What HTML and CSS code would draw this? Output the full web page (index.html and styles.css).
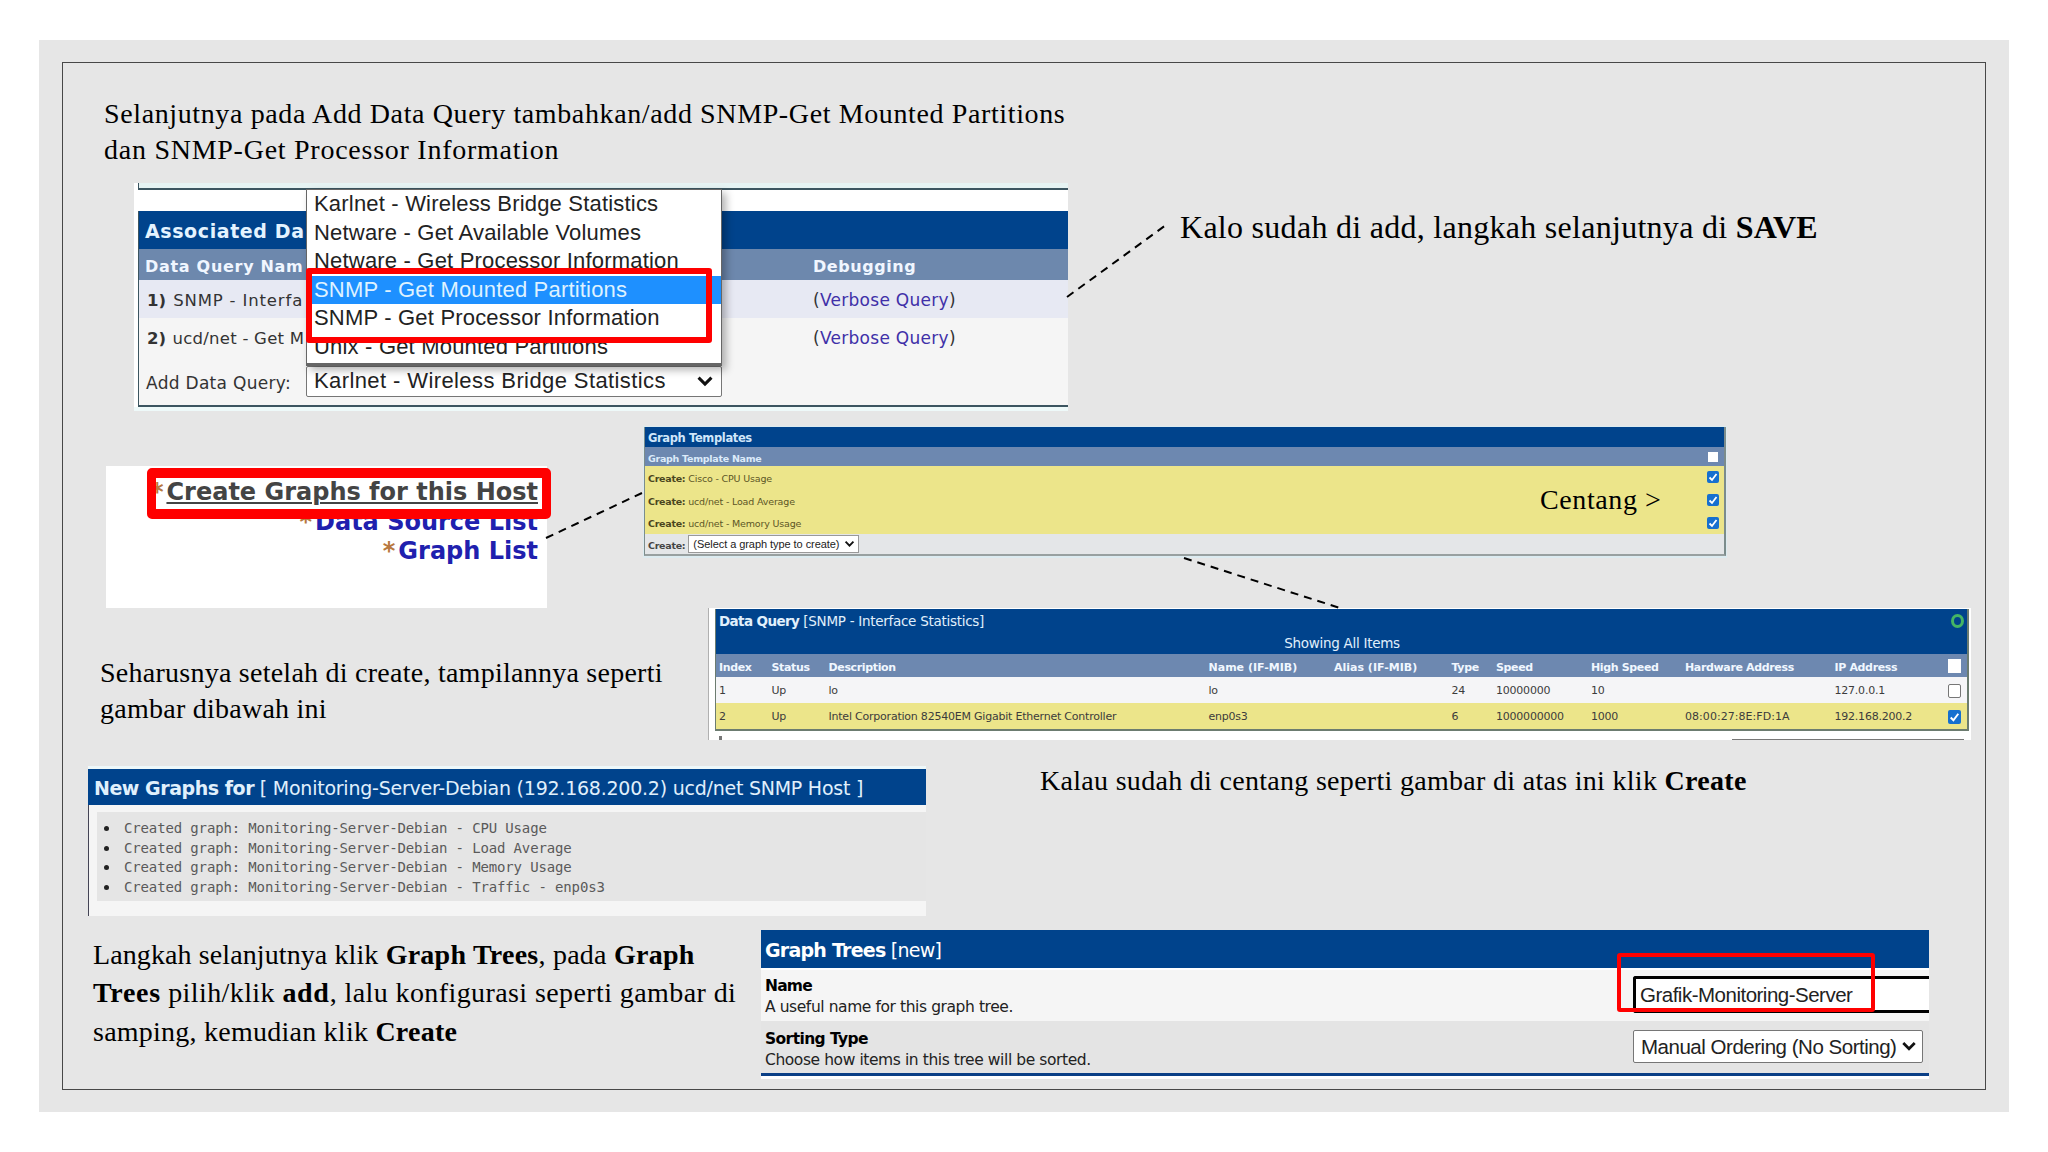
FILE: index.html
```
<!DOCTYPE html>
<html lang="id">
  <head>
    <meta charset="UTF-8" />
    <meta name="viewport" content="width=device-width, initial-scale=1.0" />
    <title>Monitoring Server - Cacti</title>
    <link rel="stylesheet" href="styles.css">
  </head>
  <body>
    <div class="page">
      <div class="slide"><div class="frame"></div></div>

      <p class="note note-query">
        Selanjutnya pada Add Data Query tambahkan/add SNMP-Get Mounted Partitions<br />
        <span class="wide">dan SNMP-Get Processor Information</span>
      </p>
      <p class="note note-save">Kalo sudah di add, langkah selanjutnya di <b>SAVE</b></p>
      <p class="note note-result">
        Seharusnya setelah di create, tampilannya seperti<br />
        gambar dibawah ini
      </p>
      <p class="note note-create">Kalau sudah di centang seperti gambar di atas ini klik <b>Create</b></p>
      <p class="note note-tree">
        <span class="line1">Langkah selanjutnya klik</span> <b>Graph Trees</b>, pada <b>Graph</b><br />
        <span class="line2"><b>Trees</b> pilih/klik <b>add</b>, lalu konfigurasi seperti gambar di</span><br />
        samping, kemudian klik <b>Create</b>
      </p>

      <!-- Associated Data Queries -->
      <div class="panel queries">
        <div class="queries-strip"></div>
        <div class="queries-table">
          <div class="q-row q-title"><b>Associated Da</b></div>
          <div class="q-row q-head"><b>Data Query Nam</b><b>Debugging</b></div>
          <div class="q-row q-one">
            <span><b>1)</b> SNMP - Interfa</span>
            <span>(<a>Verbose Query</a>)</span>
          </div>
          <div class="q-row q-two">
            <span><b>2)</b> ucd/net - Get M</span>
            <span>(<a>Verbose Query</a>)</span>
          </div>
          <div class="q-add">
            <span class="q-label">Add Data Query:</span>
            <div class="select q-select">
              <span>Karlnet - Wireless Bridge Statistics</span>
              <svg width="18" height="13" viewBox="0 0 14 10"><path d="M2 2l5 5 5-5" /></svg>
            </div>
          </div>
        </div>
        <ul class="popup">
          <li>Karlnet - Wireless Bridge Statistics</li>
          <li>Netware - Get Available Volumes</li>
          <li>Netware - Get Processor Information</li>
          <li class="active">SNMP - Get Mounted Partitions</li>
          <li>SNMP - Get Processor Information</li>
          <li>Unix - Get Mounted Partitions</li>
        </ul>
        <div class="mark mark-query"></div>
      </div>

      <!-- Host links -->
      <div class="panel links">
        <div class="link current"><i>*</i><u>Create Graphs for this Host</u></div>
        <div class="link"><i>*</i>Data Source List</div>
        <div class="link"><i>*</i>Graph List</div>
        <div class="mark mark-link"></div>
      </div>

      <!-- Graph Templates -->
      <div class="panel templates">
        <div class="t-row t-title"><b>Graph Templates</b></div>
        <div class="t-row t-head"><b>Graph Template Name</b><span class="box blank"></span></div>
        <div class="t-row t-on">
          <span><b>Create:</b> Cisco - CPU Usage</span>
          <span class="box on"><svg viewBox="0 0 12 12"><path d="M2.5 6.5l2.5 2.5 4.5-6" /></svg></span>
        </div>
        <div class="t-row t-on">
          <span><b>Create:</b> ucd/net - Load Average</span>
          <span class="box on"><svg viewBox="0 0 12 12"><path d="M2.5 6.5l2.5 2.5 4.5-6" /></svg></span>
        </div>
        <div class="t-row t-on">
          <span><b>Create:</b> ucd/net - Memory Usage</span>
          <span class="box on"><svg viewBox="0 0 12 12"><path d="M2.5 6.5l2.5 2.5 4.5-6" /></svg></span>
        </div>
        <div class="t-row t-last">
          <b>Create:</b>
          <div class="select t-select">
            <span>(Select a graph type to create)</span>
            <svg width="11" height="8" viewBox="0 0 14 10"><path d="M2 2l5 5 5-5" /></svg>
          </div>
        </div>
        <p class="note centang">Centang &gt;</p>
      </div>

      <!-- Data Query -->
      <div class="panel interfaces">
        <div class="i-table">
          <div class="i-title">
            <div class="i-name"><span><b>Data Query</b> [SNMP - Interface Statistics]</span><span class="ring"></span></div>
            <div class="i-all">Showing All Items</div>
          </div>
          <div class="i-row i-head">
            <b>Index</b><b>Status</b><b>Description</b><b class="ifmib">Name (IF-MIB)</b><b class="ifmib">Alias (IF-MIB)</b>
            <b>Type</b><b>Speed</b><b>High Speed</b><b>Hardware Address</b><b>IP Address</b><span class="box blank"></span>
          </div>
          <div class="i-row">
            <span>1</span><span>Up</span><span>lo</span><span>lo</span><span></span>
            <span>24</span><span>10000000</span><span>10</span><span></span><span>127.0.0.1</span><span class="box off"></span>
          </div>
          <div class="i-row i-on">
            <span>2</span><span>Up</span><span>Intel Corporation 82540EM Gigabit Ethernet Controller</span><span>enp0s3</span><span></span>
            <span>6</span><span>1000000000</span><span>1000</span><span class="mac">08:00:27:8E:FD:1A</span><span>192.168.200.2</span>
            <span class="box on"><svg viewBox="0 0 12 12"><path d="M2.5 6.5l2.5 2.5 4.5-6" /></svg></span>
          </div>
        </div>
        <div class="i-rest"><span class="speck"></span><span class="rule"></span></div>
      </div>

      <!-- New Graphs -->
      <div class="panel created">
        <div class="c-title"><b>New Graphs for</b> [ Monitoring-Server-Debian (192.168.200.2) ucd/net SNMP Host ]</div>
        <div class="c-body">
          <ul class="c-list">
            <li>Created graph: Monitoring-Server-Debian - CPU Usage</li>
            <li>Created graph: Monitoring-Server-Debian - Load Average</li>
            <li>Created graph: Monitoring-Server-Debian - Memory Usage</li>
            <li>Created graph: Monitoring-Server-Debian - Traffic - enp0s3</li>
          </ul>
        </div>
      </div>

      <!-- Graph Trees -->
      <div class="panel trees">
        <div class="g-title"><b>Graph Trees</b> [new]</div>
        <div class="g-row g-name">
          <div class="g-label"><b class="short">Name</b><span>A useful name for this graph tree.</span></div>
          <div class="g-input">Grafik-Monitoring-Server</div>
        </div>
        <div class="g-row g-sort">
          <div class="g-label"><b>Sorting Type</b><span>Choose how items in this tree will be sorted.</span></div>
          <div class="select g-select">
            <span>Manual Ordering (No Sorting)</span>
            <svg width="16" height="13" viewBox="0 0 14 10"><path d="M2 2l5 5 5-5" /></svg>
          </div>
        </div>
        <div class="mark mark-name"></div>
      </div>

      <!-- connectors -->
      <svg class="lines" width="2048" height="1152" viewBox="0 0 2048 1152">
        <path d="M1067 297L1166 225" />
        <path d="M546 538L642 493" />
        <path d="M1184 558L1340 608" />
      </svg>
    </div>
  </body>
</html>
```
FILE: styles.css
```
* {
  box-sizing: border-box;
  margin: 0;
  padding: 0;
}

body {
  background: #fff;
  font-family: "DejaVu Sans", sans-serif;
}

ul {
  list-style: none;
}

.page {
  position: relative;
  width: 2048px;
  height: 1152px;
  padding: 40px 39px;
  overflow: hidden;
}

.slide {
  width: 1970px;
  height: 1072px;
  padding: 22px 23px;
  background: #e6e6e6;
}

.frame {
  width: 1924px;
  height: 1028px;
  border: 1px solid #484848;
}

/* slide text */
.note {
  position: absolute;
  font-family: "Liberation Serif", serif;
  font-size: 28px;
  line-height: 36px;
  color: #000;
  white-space: nowrap;
}

.note-query {
  left: 104px;
  top: 96px;
  letter-spacing: 0.62px;
}

.note-query .wide {
  letter-spacing: 0.74px;
}

.note-save {
  left: 1180px;
  top: 209px;
  font-size: 32px;
  letter-spacing: 0.28px;
}

.note-result {
  left: 100px;
  top: 655px;
  letter-spacing: 0.25px;
}

.note-create {
  left: 1040px;
  top: 763px;
  letter-spacing: 0.3px;
}

.note-tree {
  left: 93px;
  top: 936px;
  line-height: 38.3px;
  letter-spacing: 0.24px;
}

.note-tree .line1 {
  letter-spacing: 0.1px;
}

.note-tree .line2 {
  letter-spacing: 0.41px;
}

.note-tree .line2 b {
  letter-spacing: 0.7px;
}

/* shared */
.panel {
  position: absolute;
  overflow: hidden;
  white-space: nowrap;
}

.select {
  display: flex;
  align-items: center;
  justify-content: space-between;
  background: #fff;
  border: 1px solid #767676;
  border-radius: 2px;
  font-family: "Liberation Sans", sans-serif;
  color: #222;
}

.select path {
  fill: none;
  stroke: #111;
  stroke-width: 2.4;
}

.mark {
  position: absolute;
  border: 6px solid #f00;
  border-radius: 3px;
}

.box {
  display: flex;
  width: 12px;
  height: 12px;
  border-radius: 2px;
}

.box.blank {
  background: #fff;
}

.box.off {
  background: #fff;
  border: 1px solid #767676;
}

.box.on {
  background: #1670cf;
}

.box path {
  fill: none;
  stroke: #fff;
  stroke-width: 1.8;
}

.lines {
  position: absolute;
  left: 0;
  top: 0;
}

.lines path {
  stroke: #000;
  stroke-width: 2;
  stroke-dasharray: 8 6;
}

/* Associated Data Queries */
.queries {
  left: 134px;
  top: 183px;
  width: 934px;
  height: 228px;
  background: #fff;
  border-bottom: 4px solid #eef9f9;
}

.queries-strip {
  height: 7px;
  margin: 0 0 21px 4px;
  background: #e6f3f3;
  border-left: 1px solid #3c5560;
  border-bottom: 2px solid #3c5560;
}

.queries-table {
  height: 196px;
  margin-left: 4px;
  background: #f5f5f5;
  border-left: 1px solid #3c5560;
  border-bottom: 2px solid #3c5560;
}

.q-row {
  display: grid;
  grid-template-columns: 668px 1fr;
  align-items: center;
  padding-left: 6px;
  font-size: 17px;
  letter-spacing: 0.28px;
  color: #333;
}

.q-row span:first-child {
  font-size: 16.5px;
  letter-spacing: 0.85px;
}

.q-row.q-two span:first-child {
  letter-spacing: 0.25px;
}

.q-row span b {
  padding: 0 1px 0 2px;
  letter-spacing: 0;
}

.q-title {
  height: 38px;
  padding-top: 2px;
  background: #00438c;
  color: #e4f3ff;
  font-size: 19px;
  letter-spacing: 0.6px;
}

.q-head {
  height: 31px;
  padding-top: 3px;
  background: #6d88ad;
  color: #f0f6ff;
  font-size: 16px;
  letter-spacing: 0.7px;
}

.q-head b + b {
  letter-spacing: 0.55px;
}

.q-one {
  height: 38px;
  padding-top: 2px;
  background: #e7e9f3;
}

.q-two {
  height: 38px;
  padding-top: 2px;
}

.q-row a {
  color: #4030a8;
}

.q-add {
  display: flex;
  align-items: center;
  height: 50px;
  padding-left: 7px;
  font-size: 17px;
  letter-spacing: 0.3px;
  color: #333;
}

.q-label {
  width: 145px;
  padding-top: 4px;
}

.q-select {
  width: 416px;
  height: 31px;
  margin-left: 15px;
  padding: 0 7px;
  font-size: 22px;
  letter-spacing: 0.4px;
}

.popup {
  position: absolute;
  left: 172px;
  top: 6px;
  width: 416px;
  height: 177px;
  background: #fff;
  border: 1px solid #666;
  border-bottom: 3px solid #666;
  box-shadow: 4px 4px 8px rgba(0, 0, 0, 0.3);
  font-family: "Liberation Sans", sans-serif;
  font-size: 22px;
  line-height: 28.6px;
  letter-spacing: 0.19px;
  color: #222;
}

.popup li {
  padding-left: 7px;
}

.popup .active {
  background: #1e90ff;
  color: #dff2ff;
}

.mark-query {
  left: 172px;
  top: 85px;
  width: 406px;
  height: 75px;
}

/* host links */
.links {
  left: 106px;
  top: 466px;
  width: 446px;
  height: 142px;
  padding: 12px 14px 0 0;
  background: linear-gradient(90deg, #fff 441px, transparent 441px);
  font-size: 24px;
  font-weight: bold;
  line-height: 29.6px;
  text-align: right;
  color: #2020ae;
}

.link i {
  margin-right: 3px;
  font-style: normal;
  color: #b87840;
}

.link.current {
  color: #444;
}

.link u {
  text-decoration-thickness: 2px;
  text-underline-offset: 2px;
}

.mark-link {
  left: 41px;
  top: 2px;
  width: 404px;
  height: 51px;
  border-width: 10px 9px;
  border-radius: 5px;
}

/* Graph Templates */
.templates {
  left: 643px;
  top: 426px;
  width: 1084px;
  height: 132px;
  border: 1px solid #dcebf0;
  border-bottom-width: 2px;
  font-size: 9.5px;
  letter-spacing: -0.17px;
  color: #5c5626;
}

.t-row {
  display: flex;
  align-items: center;
  justify-content: space-between;
  height: 22.7px;
  padding: 0 5px 0 3px;
  border-left: 1px solid #7c8c8c;
  border-right: 2px solid #7c8c8c;
}

.t-row b {
  color: #4a4520;
  letter-spacing: -0.28px;
}

.t-title {
  height: 20px;
  padding-top: 2px;
  background: #00438c;
  font-size: 11.5px;
}

.t-title b {
  color: #cfe6fa;
  letter-spacing: -0.38px;
}

.t-head {
  height: 19px;
  background: #6d88b0;
}

.t-head b {
  padding-top: 4px;
  color: #dcebfa;
}

.t-head .box {
  width: 10px;
  height: 10px;
  margin-right: 1px;
  border-radius: 0;
}

.t-on {
  background: #ece58a;
}

.t-on > span:first-child {
  padding-top: 2px;
}

.t-last {
  height: 22px;
  justify-content: flex-start;
  background: #e4e6e8;
  border-bottom: 2px solid #98a0a0;
}

.t-last b {
  padding-top: 2px;
  color: #444;
}

.t-select {
  width: 171px;
  height: 18px;
  margin-left: 3px;
  padding: 0 3px 0 4px;
  border-color: #999;
  border-radius: 0;
  font-size: 11px;
  letter-spacing: -0.06px;
}

.centang {
  left: 896px;
  top: 55px;
  letter-spacing: 0.6px;
}

/* Data Query */
.interfaces {
  left: 708px;
  top: 608px;
  width: 1263px;
  height: 132px;
  padding: 1px 2px 0 6px;
  background: #fff;
  border-left: 1px solid #b0b0b0;
  font-size: 11px;
  letter-spacing: -0.22px;
  color: #3c3c3c;
}

.i-table {
  border: 1px solid #6c7c70;
  border-width: 0 2px 2px 1px;
}

.i-title {
  height: 45px;
  padding: 2px 3px 0 3px;
  background: #00438c;
  color: #e0f0fc;
  font-size: 13.5px;
  letter-spacing: -0.28px;
  line-height: 22px;
}

.i-title b {
  letter-spacing: -0.6px;
}

.i-name {
  display: flex;
  align-items: center;
  justify-content: space-between;
  height: 20px;
}

.i-all {
  padding: 1px 0 0 1px;
  text-align: center;
}

.ring {
  width: 13px;
  height: 14px;
  border: 3px solid #45b565;
  border-radius: 50%;
}

.i-row {
  display: grid;
  grid-template-columns: 52.5px 57px 380px 125.5px 117.5px 44.5px 95px 94px 149.5px 113px 14px;
  align-items: center;
  height: 26px;
  padding: 1px 0 0 3px;
  background: #f5f5f7;
}

.i-head {
  height: 23px;
  padding-top: 3px;
  background: #6d88b0;
  color: #f0f7ff;
  letter-spacing: -0.35px;
}

.i-head .ifmib {
  letter-spacing: 0;
}

.interfaces .i-head .box {
  height: 14px;
  margin-bottom: 3px;
  border-radius: 0;
}

.i-on {
  background: #ece58a;
}

.mac {
  letter-spacing: 0.05px;
}

.interfaces .box {
  width: 13px;
  height: 14px;
}

.i-rest {
  display: flex;
  align-items: flex-end;
  justify-content: space-between;
  height: 9px;
  padding: 0 5px 0 4px;
}

.speck {
  width: 3px;
  height: 4px;
  background: #777;
}

.rule {
  width: 232px;
  height: 1px;
  background: #777;
}

/* New Graphs */
.created {
  left: 88px;
  top: 766px;
  width: 838px;
  height: 150px;
  border-top: 3px solid #eef8fa;
}

.c-title {
  height: 36px;
  padding-left: 6px;
  background: #00438c;
  color: #e0f0fc;
  font-size: 19px;
  line-height: 39px;
  letter-spacing: -0.24px;
}

.c-title b {
  letter-spacing: -0.46px;
}

.c-body {
  height: 111px;
  padding: 7px 0 0 8px;
  background: #f5f5f5;
  border-left: 1px solid #445;
}

.c-list {
  height: 89px;
  padding: 7px 0 0 7px;
  background: #e5e5e5;
  font-family: "DejaVu Sans Mono", monospace;
  font-size: 14px;
  line-height: 19.5px;
  letter-spacing: -0.14px;
  color: #5a5a5a;
}

.c-list li {
  display: flex;
  align-items: center;
}

.c-list li::before {
  content: "";
  width: 5px;
  height: 5px;
  margin-right: 15px;
  border-radius: 50%;
  background: #222;
}

/* Graph Trees */
.trees {
  left: 761px;
  top: 930px;
  width: 1168px;
  height: 149px;
  background: #fff;
  border-bottom: 3px solid #fff;
  color: #222;
}

.g-title {
  height: 38px;
  padding-left: 4px;
  background: #00438c;
  color: #fff;
  font-size: 19px;
  line-height: 41px;
  letter-spacing: -0.76px;
}

.g-row {
  display: flex;
  justify-content: space-between;
}

.g-name {
  height: 53px;
  padding: 6px 0 0 4px;
  background: #f5f5f5;
  border-top: 2px solid #fff;
}

.g-sort {
  height: 55px;
  padding: 8px 6px 0 4px;
  background: #e4e4e4;
  border-bottom: 3px solid #0b3f86;
}

.g-label {
  display: flex;
  flex-direction: column;
  font-size: 15.5px;
  line-height: 21px;
  letter-spacing: -0.42px;
}

.g-label b {
  color: #000;
  letter-spacing: -0.6px;
}

.g-label .short {
  letter-spacing: -0.8px;
}

.g-input {
  width: 296px;
  height: 37px;
  padding-left: 4px;
  background: #fff;
  border: 3px solid #000;
  border-right: 0;
  border-radius: 3px 0 0 3px;
  font: 20.5px/31px "Liberation Sans", sans-serif;
  letter-spacing: -0.5px;
}

.g-select {
  width: 290px;
  height: 33px;
  margin-top: 1px;
  padding: 0 5px 0 7px;
  font-size: 20.5px;
  letter-spacing: -0.48px;
}

.mark-name {
  left: 856px;
  top: 23px;
  width: 258px;
  height: 59px;
  border-width: 4px;
}
```
